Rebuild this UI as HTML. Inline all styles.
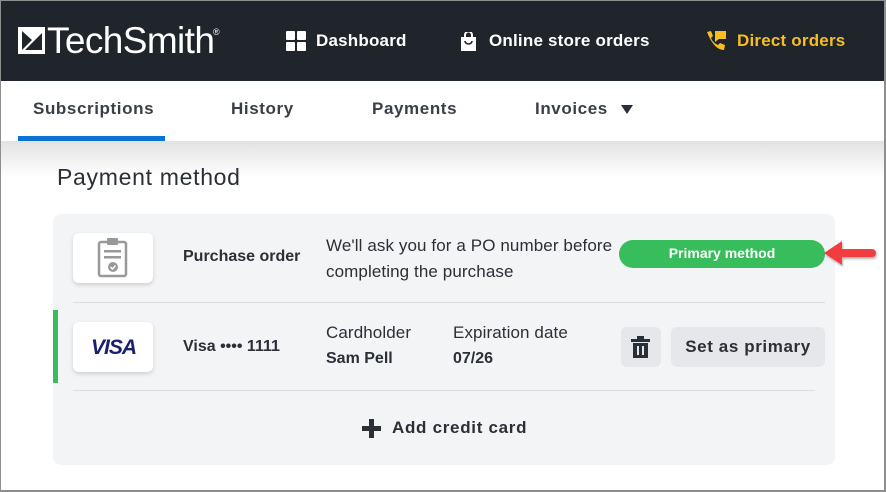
<!DOCTYPE html>
<html><head><style>
*{margin:0;padding:0;box-sizing:border-box}
body{width:886px;height:492px;overflow:hidden;background:#fff;font-family:"Liberation Sans",sans-serif;position:relative;color:#2b2f36}
.frame{position:absolute;left:0;top:0;width:886px;height:492px;border:1px solid #8e8e8e;border-right-width:2px;border-bottom-width:2px;pointer-events:none;z-index:10}
.hdr{position:absolute;left:0;top:0;width:886px;height:81px;background:#20242b}
.a{position:absolute;font-weight:bold;font-size:17px;color:#fff;top:31px;letter-spacing:.2px}
.tabs{position:absolute;left:0;top:81px;width:886px;height:60px;background:#fff}
.t{position:absolute;top:18px;font-size:17px;font-weight:bold;color:#3a3f47;letter-spacing:.6px}
.grad{position:absolute;left:0;top:141px;width:886px;height:36px;background:linear-gradient(#e2e2e2,#fff)}
.abs{position:absolute}
.card{position:absolute;left:53px;top:214px;width:782px;height:251px;background:#f3f4f6;border-radius:8px}
.ic{position:absolute;width:80px;height:50px;background:#fff;border-radius:6px;box-shadow:0 2px 4px rgba(0,0,0,.15)}
.txt{position:absolute;font-size:16px;color:#2b2f36}
.n{font-size:17px;letter-spacing:.1px}
.b{font-weight:bold}
</style></head><body>
<div class="hdr">
 <svg class="abs" style="left:18px;top:27px" width="27" height="27" viewBox="0 0 27 27"><path d="M0 0H27V27H0Z M4 4L4 23 14 13Z M7 23H24V6Z" fill="#fff" fill-rule="evenodd"/></svg>
 <div class="abs" style="left:47px;top:20px;font-size:37px;color:#fff;letter-spacing:-0.6px">TechSmith</div>
 <div class="abs" style="left:213px;top:27px;font-size:9px;color:#fff">®</div>
 <svg class="abs" style="left:286px;top:31px" width="20" height="20"><rect x="0" y="0" width="9" height="9" rx="1" fill="#fff"/><rect x="11" y="0" width="9" height="9" rx="1" fill="#fff"/><rect x="0" y="11" width="9" height="9" rx="1" fill="#fff"/><rect x="11" y="11" width="9" height="9" rx="1" fill="#fff"/></svg>
 <div class="a" style="left:316px">Dashboard</div>
 <svg class="abs" style="left:460px;top:32px" width="17" height="19" viewBox="0 0 17 19"><path d="M1 5H16V19H1Z" fill="#fff"/><path d="M5 5V3a3.5 3.5 0 0 1 7 0V5" stroke="#fff" stroke-width="2" fill="none"/><path d="M5 9a3.5 3 0 0 0 7 0" stroke="#20242b" stroke-width="1.6" fill="none"/></svg>
 <div class="a" style="left:489px">Online store orders</div>
 <svg class="abs" style="left:705px;top:30px" width="22" height="22" viewBox="0 0 22 22"><path d="M2 2L6 1 8 6 6 8Q8 13 13 15L15 13 20 15 19 20Q9 20 2 2Z" fill="#f6be22"/><path d="M10 1H21V9H14L10 12Z" fill="#f6be22"/></svg>
 <div class="a" style="left:737px;color:#f6be22">Direct orders</div>
</div>
<div class="tabs">
 <div class="t" style="left:33px">Subscriptions</div>
 <div class="abs" style="left:18px;top:55px;width:147px;height:5px;background:#0a72d4"></div>
 <div class="t" style="left:231px">History</div>
 <div class="t" style="left:372px">Payments</div>
 <div class="t" style="left:535px">Invoices</div>
 <svg class="abs" style="left:621px;top:24px" width="12" height="9"><path d="M0 0H12L6 9Z" fill="#2b2f36"/></svg>
</div>
<div class="grad"></div>
<div class="abs" style="left:57px;top:164px;font-size:23px;letter-spacing:.7px;color:#2b2f36">Payment method</div>
<div class="card"></div>
<div class="ic" style="left:73px;top:233px"></div>
<svg class="abs" style="left:96px;top:237px" width="34" height="42" viewBox="0 0 34 42"><rect x="3" y="5" width="27" height="34" rx="2" fill="none" stroke="#999" stroke-width="2.5"/><rect x="11" y="1" width="11" height="7" rx="1" fill="#999"/><rect x="8" y="13" width="17" height="2.5" fill="#999"/><rect x="8" y="19" width="17" height="2.5" fill="#999"/><circle cx="17" cy="30" r="5" fill="#999"/><path d="M14.5 30l2 2 3-3.5" stroke="#fff" stroke-width="1.4" fill="none"/></svg>
<div class="txt b" style="left:183px;top:248px">Purchase order</div>
<div class="txt n" style="left:326px;top:233px;line-height:26px">We'll ask you for a PO number before<br>completing the purchase</div>
<div class="abs" style="left:619px;top:240px;width:206px;height:28px;border-radius:14px;background:#37bd5b;color:#fff;font-weight:bold;font-size:14px;text-align:center;line-height:27px">Primary method</div>
<svg class="abs" style="left:810px;top:236px" width="70" height="36" viewBox="0 0 70 36"><path d="M14 17L32 5V13H62a4 4 0 0 1 0 8H32V29Z" fill="#f23c40" style="filter:drop-shadow(1px 2px 1px rgba(0,0,0,.3))"/></svg>
<div class="abs" style="left:73px;top:302px;width:752px;height:1px;background:#dcdde0"></div>
<div class="abs" style="left:53px;top:310px;width:5px;height:73px;background:#37bd5b"></div>
<div class="ic" style="left:73px;top:322px"></div>
<div class="abs" style="left:91px;top:336px;font-size:21px;font-weight:bold;font-style:italic;color:#1a1f71;letter-spacing:-1px">VISA</div>
<div class="txt b" style="left:183px;top:338px">Visa •••• 1111</div>
<div class="txt n" style="left:326px;top:323px">Cardholder</div>
<div class="txt b" style="left:326px;top:350px">Sam Pell</div>
<div class="txt n" style="left:453px;top:323px">Expiration date</div>
<div class="txt b" style="left:453px;top:350px">07/26</div>
<div class="abs" style="left:621px;top:327px;width:40px;height:40px;border-radius:6px;background:#e6e7ea"></div>
<svg class="abs" style="left:631px;top:336px" width="19" height="22" viewBox="0 0 19 22"><rect x="0" y="3" width="19" height="3" fill="#2b2f36"/><rect x="6" y="0" width="7" height="3" fill="#2b2f36"/><path d="M2 7H17V22H2Z" fill="#2b2f36"/><rect x="6" y="10" width="2" height="9" fill="#e6e7ea"/><rect x="11" y="10" width="2" height="9" fill="#e6e7ea"/></svg>
<div class="abs" style="left:671px;top:327px;width:154px;height:40px;border-radius:6px;background:#e6e7ea;font-size:17px;font-weight:bold;color:#2b2f36;text-align:center;line-height:40px;letter-spacing:.6px">Set as primary</div>
<div class="abs" style="left:73px;top:390px;width:742px;height:1px;background:#dcdde0"></div>
<svg class="abs" style="left:362px;top:419px" width="19" height="19"><path d="M7 0H12V7H19V12H12V19H7V12H0V7H7Z" fill="#2b2f36"/></svg>
<div class="abs" style="left:392px;top:418px;font-size:17px;font-weight:bold;letter-spacing:.7px;color:#2b2f36">Add credit card</div>
<div class="frame"></div>
</body></html>
